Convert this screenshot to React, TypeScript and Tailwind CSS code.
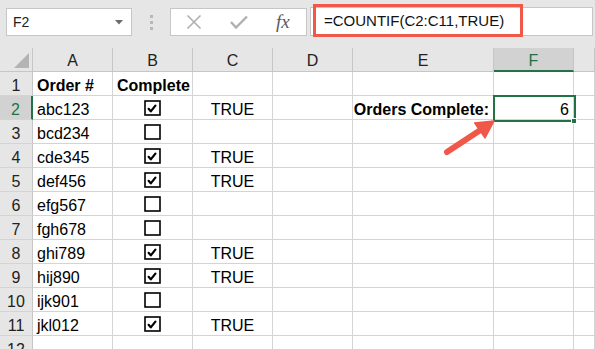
import React from "react";

const cols = [
  { key: "A", w: "w-[80px]" },
  { key: "B", w: "w-[80px]" },
  { key: "C", w: "w-[80px]" },
  { key: "D", w: "w-[80px]" },
  { key: "E", w: "w-[141px]" },
  { key: "F", w: "w-[80px]" },
  { key: "G", w: "flex-1" },
];

const orders: [string, boolean][] = [
  ["abc123", true],
  ["bcd234", false],
  ["cde345", true],
  ["def456", true],
  ["efg567", false],
  ["fgh678", false],
  ["ghi789", true],
  ["hij890", true],
  ["ijk901", false],
  ["jkl012", true],
];

function Checkbox({ checked }: { checked: boolean }) {
  return (
    <svg width="17" height="16" viewBox="0 0 17 16" className="block">
      <rect x="1" y="1" width="15" height="14" fill="white" stroke="#000" strokeWidth="1.6" />
      {checked && (
        <path d="M4.6 8.8 L6.8 11.4 L11.4 5.6" fill="none" stroke="#000" strokeWidth="2.2" strokeLinecap="round" strokeLinejoin="round" />
      )}
    </svg>
  );
}

function Cell({
  w,
  children,
  align = "left",
  bold = false,
}: {
  w: string;
  children?: React.ReactNode;
  align?: "left" | "center" | "right";
  bold?: boolean;
}) {
  const justify = align === "center" ? "justify-center" : align === "right" ? "justify-end" : "justify-start";
  return (
    <div
      className={`${w} h-full flex ${justify} border-r border-b border-[#d4d4d4] px-[4px] pt-[4px] leading-[20px] whitespace-nowrap ${
        bold ? "font-bold" : ""
      }`}
    >
      {children}
    </div>
  );
}

function RowHeader({ n, active = false }: { n: number; active?: boolean }) {
  return (
    <div
      className={`w-[33px] h-full flex justify-center pt-[4px] leading-[20px] border-b border-[#d4d4d4] ${
        active
          ? "bg-[#d2d2d2] text-[#217346] border-r-2 border-r-[#217346]"
          : "bg-[#e6e6e6] text-[#222] border-r border-r-[#c6c6c6]"
      }`}
    >
      {n}
    </div>
  );
}

export default function App() {
  return (
    <div className="relative w-[595px] h-[349px] overflow-hidden bg-white text-black text-[16px] font-['Liberation_Sans',Arial,sans-serif]">
      {/* Formula bar */}
      <div className="h-[48px] bg-[#e6e6e6] flex items-start">
        <div className="ml-[6px] mt-[8px] w-[126px] h-[28px] bg-white border border-[#c6c6c6] flex items-center justify-between pl-[6px] pr-[8px] text-[14px] text-[#222]">
          <span>F2</span>
          <svg width="8" height="5" viewBox="0 0 8 5">
            <path d="M0 0 H8 L4 4.5 Z" fill="#6b6b6b" />
          </svg>
        </div>
        <div className="ml-[18px] mt-[15px] flex flex-col gap-[3px]">
          <span className="w-[3px] h-[3px] bg-[#b8b8b8]" />
          <span className="w-[3px] h-[3px] bg-[#b8b8b8]" />
          <span className="w-[3px] h-[3px] bg-[#b8b8b8]" />
        </div>
        <div className="ml-[17px] mt-[8px] w-[137px] h-[28px] bg-white border border-[#c6c6c6] flex items-center">
          <svg width="16" height="14" viewBox="0 0 16 14" className="ml-[15px]">
            <path d="M1.5 0.5 L14.5 13.5 M14.5 0.5 L1.5 13.5" stroke="#b0b0b0" strokeWidth="1.6" />
          </svg>
          <svg width="18" height="14" viewBox="0 0 18 14" className="ml-[28px]">
            <path d="M1 7 L6 12.5 L17 1.5" fill="none" stroke="#b0b0b0" strokeWidth="2.4" />
          </svg>
          <span className="ml-[28px] font-['Liberation_Serif',serif] italic text-[19px] text-[#5a5a5a] leading-none -mt-[2px]">
            fx
          </span>
        </div>
        <div className="ml-[3px] mt-[7px] w-[283px] h-[29px] bg-white border border-[#c6c6c6] flex items-center pl-[13px] text-[15px] text-[#111]">
          =COUNTIF(C2:C11,TRUE)
        </div>
      </div>

      {/* Highlight around formula */}
      <div className="absolute left-[313px] top-[4px] w-[210px] h-[33px] border-[3px] border-[#f0584a]" />

      {/* Column headers */}
      <div className="h-[24px] flex">
        <div className="w-[33px] h-full bg-[#e6e6e6] border-r border-b border-[#c6c6c6] flex items-end justify-end pr-[3px] pb-[3px]">
          <svg width="15" height="15" viewBox="0 0 15 15">
            <path d="M15 0 V15 H0 Z" fill="#b4b4b4" />
          </svg>
        </div>
        {cols.map((c) =>
          c.key === "F" ? (
            <div
              key={c.key}
              className={`${c.w} h-full bg-[#d2d2d2] text-[#217346] border-r border-[#c6c6c6] border-b-2 border-b-[#217346] flex justify-center pt-[3px] leading-[20px]`}
            >
              {c.key}
            </div>
          ) : (
            <div
              key={c.key}
              className={`${c.w} h-full bg-[#e6e6e6] text-[#222] border-r border-b border-[#c6c6c6] flex justify-center pt-[3px] leading-[20px]`}
            >
              {c.key === "G" ? "" : c.key}
            </div>
          )
        )}
      </div>

      {/* Row 1 */}
      <div className="h-[24px] flex">
        <RowHeader n={1} />
        <Cell w="w-[80px]" bold>
          Order #
        </Cell>
        <Cell w="w-[80px]" bold>
          Complete
        </Cell>
        <Cell w="w-[80px]" />
        <Cell w="w-[80px]" />
        <Cell w="w-[141px]" />
        <Cell w="w-[80px]" />
        <Cell w="flex-1" />
      </div>

      {orders.map(([id, done], i) => {
        const n = i + 2;
        return (
          <div key={id} className="h-[24px] flex">
            <RowHeader n={n} active={n === 2} />
            <Cell w="w-[80px]">{id}</Cell>
            <div className="w-[80px] h-full flex justify-center items-center pt-[1px] border-r border-b border-[#d4d4d4]">
              <Checkbox checked={done} />
            </div>
            <Cell w="w-[80px]" align="center">
              {done ? "TRUE" : ""}
            </Cell>
            <Cell w="w-[80px]" />
            <Cell w="w-[141px]" align="right" bold>
              {n === 2 ? "Orders Complete:" : ""}
            </Cell>
            {n === 2 ? (
              <div className="relative w-[80px] h-full flex justify-end border-r border-b border-[#d4d4d4] px-[4px] pt-[4px] leading-[20px]">
                6
                <div className="absolute -left-px -top-px w-[83px] h-[27px] border-2 border-[#217346]" />
                <div className="absolute left-[77px] top-[22px] w-[6px] h-[6px] bg-[#217346] border border-white" />
              </div>
            ) : (
              <Cell w="w-[80px]" />
            )}
            <Cell w="flex-1" />
          </div>
        );
      })}

      {/* Row 12 */}
      <div className="h-[24px] flex">
        <RowHeader n={12} />
        <Cell w="w-[80px]" />
        <Cell w="w-[80px]" />
        <Cell w="w-[80px]" />
        <Cell w="w-[80px]" />
        <Cell w="w-[141px]" />
        <Cell w="w-[80px]" />
        <Cell w="flex-1" />
      </div>

      {/* Callout arrow */}
      <svg className="absolute left-0 top-0 pointer-events-none" width="595" height="349" viewBox="0 0 595 349">
        <line x1="447" y1="152" x2="482" y2="129" stroke="#f0584a" strokeWidth="6" strokeLinecap="round" />
        <path d="M494 121 L485 137.9 L474.6 122.9 Z" fill="#f0584a" stroke="#f0584a" strokeWidth="1.5" strokeLinejoin="round" />
      </svg>
    </div>
  );
}
